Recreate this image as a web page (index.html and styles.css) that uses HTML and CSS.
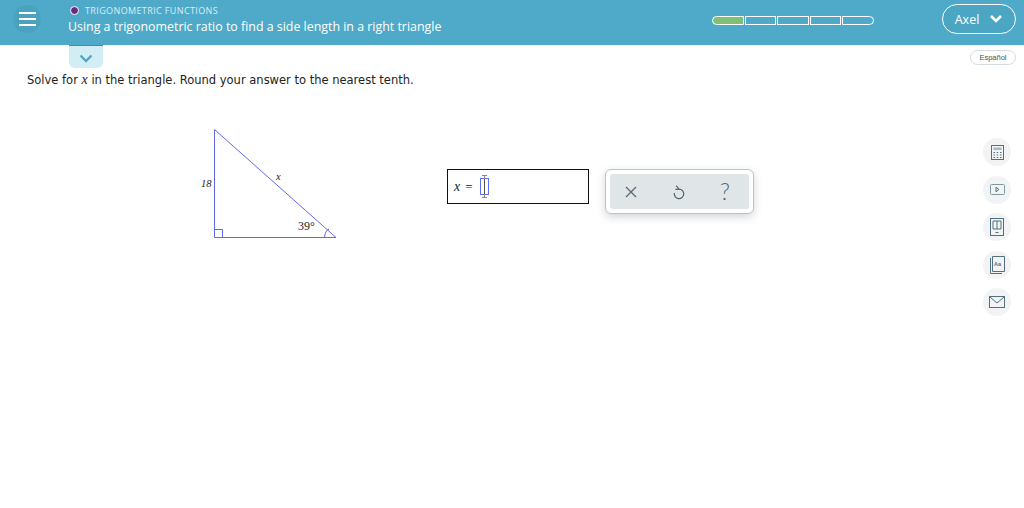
FILE: index.html
```html
<!DOCTYPE html>
<html lang="en">
<head>
<meta charset="utf-8">
<title>Trigonometric Functions</title>
<link rel="stylesheet" href="styles.css">
</head>
<body>
<header class="topbar">
  <button class="menu" aria-label="Menu"><span></span><span></span><span></span></button>
  <div class="heading">
    <div class="topic"><i class="dot"></i>TRIGONOMETRIC FUNCTIONS</div>
    <div class="title">Using a trigonometric ratio to find a side length in a right triangle</div>
  </div>
  <div class="progress">
    <span class="seg first done"></span><span class="seg"></span><span class="seg"></span><span class="seg"></span><span class="seg last"></span>
  </div>
  <div class="user">Axel
    <svg width="14" height="10" viewBox="0 0 14 10"><path d="M2 2l5 5 5-5" fill="none" stroke="#fff" stroke-width="2.6"/></svg>
  </div>
</header>
<div class="strip">
  <div class="tab"><svg width="14" height="9" viewBox="0 0 14 9"><path d="M1.500 1.500L7 7l5.500-5.500" fill="none" stroke="#4ea9c6" stroke-width="2.400"/></svg></div>
  <div class="lang">Español</div>
</div>
<main class="work">
  <section class="content">
    <p class="prompt">Solve for <var>x</var> in the triangle. Round your answer to the nearest tenth.</p>
    <div class="figure-row">
      <svg class="triangle" width="145" height="120" viewBox="0 0 145 120">
        <path d="M19.500 4.500V112.500H141Z" fill="none" stroke="#6068ea" stroke-width="1"/>
        <path d="M19.500 104.500H27.500V112.500" fill="none" stroke="#6068ea" stroke-width="1"/>
        <path d="M129.500 112.500Q130 106 134 104" fill="none" stroke="#6068ea" stroke-width="1"/>
        <text class="lbl it" x="6" y="62">18</text>
        <text class="lbl it" x="81" y="55">x</text>
        <text class="lbl deg" x="103" y="105">39°</text>
      </svg>
      <div class="answer">
        <var>x</var><span class="eq">=</span>
        <span class="slot"><i></i></span>
      </div>
      <div class="palette">
        <div class="palette-inner">
          <svg width="14" height="14" viewBox="0 0 14 14"><path d="M2 2l10 10M12 2L2 12" stroke="#54666f" stroke-width="1.200" fill="none"/></svg>
          <svg width="14" height="16" viewBox="0 0 14 16"><path d="M7 5.200A4.700 4.700 0 1 1 2.400 9M7 5.200L4.200 1.600M7 5.200L3.400 5.400" stroke="#54666f" stroke-width="1.200" fill="none"/></svg>
          <span class="help">?</span>
        </div>
      </div>
    </div>
  </section>
  <aside class="rail">
    <div class="tool"><svg width="13" height="15" viewBox="0 0 13 15"><rect x=".5" y=".5" width="12" height="14" fill="none" stroke="#52707f"/><rect x="2.500" y="2.500" width="8" height="2.500" fill="#a9b9c1"/><path d="M2.500 7.500h1.500M5.700 7.500h1.500M9 7.500h1.500M2.500 10h1.500M5.700 10h1.500M9 10h1.500M2.500 12.500h1.500M5.700 12.500h1.500M9 12.500h1.500" stroke="#52707f" stroke-width="1.200"/></svg></div>
    <div class="tool"><svg width="15" height="11" viewBox="0 0 15 11"><rect x=".5" y=".5" width="14" height="10" rx="1" fill="none" stroke="#8298a3"/><path d="M6 3.200v4.600l3-2.300z" fill="none" stroke="#52707f"/></svg></div>
    <div class="tool"><svg width="14" height="18" viewBox="0 0 14 18"><rect x=".5" y=".5" width="13" height="17" fill="none" stroke="#52707f"/><path d="M3 3h8v8H3zM7 3v8M5.500 14.500h3" fill="none" stroke="#52707f"/></svg></div>
    <div class="tool"><svg width="15" height="18" viewBox="0 0 15 18"><path d="M2.500 .5H14.500V15.500H2.500ZM.5 2V17.500H12" fill="none" stroke="#52707f"/><text x="4" y="10" class="aa">Aa</text></svg></div>
    <div class="tool"><svg width="16" height="12" viewBox="0 0 16 12"><rect x=".5" y=".5" width="15" height="11" fill="none" stroke="#52707f"/><path d="M1 1l7 6 7-6" fill="none" stroke="#52707f"/></svg></div>
  </aside>
</main>
</body>
</html>
```
FILE: styles.css
```css
* { box-sizing: border-box; }
html, body { margin: 0; height: 100%; background: #fff; overflow: hidden; }
body { font-family: "DejaVu Sans", sans-serif; color: #222; }

.topbar { height: 45px; background: #4eaac8; display: flex; align-items: flex-start; color: #fff; font-family: "Open Sans", sans-serif; }
.menu { width: 28px; height: 28px; margin: 5px 0 0 13px; padding: 0; border: 0; border-radius: 50%; background: #4ba2bf; display: flex; flex-direction: column; justify-content: center; align-items: center; gap: 4px; flex: none; }
.menu span { width: 17px; height: 2px; background: #fff; }
.heading { margin-left: 27px; width: 644px; flex: none; }
.topic { margin-top: 4px; height: 13px; display: flex; align-items: center; font-size: 9px; letter-spacing: .38px; color: #dcedf3; }
.dot { width: 9px; height: 9px; border-radius: 50%; background: #6b2a80; border: 1px solid #fff; margin: 0 6px 0 2px; }
.title { margin-top: 1px; font-size: 12.400px; line-height: 17px; white-space: nowrap; }
.progress { display: flex; gap: 1px; margin: 16px 0 0 0; width: 162px; height: 9px; flex: none; }
.seg { flex: 1; border: 1px solid #fff; }
.seg.first { border-radius: 4.500px 0 0 4.500px; background: #7fbf77; }
.seg.last { border-radius: 0 4.500px 4.500px 0; }
.user { margin: 4px 0 0 68px; width: 74px; height: 30px; border: 1px solid #fff; border-radius: 15px; background: #4ba6c3; display: flex; align-items: center; justify-content: center; gap: 10px; font-size: 12.500px; flex: none; }

.strip { height: 23px; display: flex; justify-content: space-between; padding: 0 8px 0 69px; }
.tab { width: 34px; height: 23px; background: #d3edf4; border-top: 1px solid #3f8fab; border-radius: 0 0 6px 6px; display: flex; align-items: center; justify-content: center; padding-top: 2px; }
.lang { width: 46px; height: 15px; margin-top: 5px; border: 1px solid #d5dcdf; border-radius: 8px; font-size: 7.500px; line-height: 13px; text-align: center; color: #3f5560; font-family: "Liberation Sans", sans-serif; }

.work { display: flex; justify-content: space-between; padding: 0 13px 0 27px; }
.prompt { margin: 4px 0 0; font-size: 11.500px; line-height: 16px; white-space: nowrap; color: #222; }
var { font-family: "Liberation Serif", serif; font-style: italic; font-size: 14px; }
.figure-row { display: flex; align-items: flex-start; margin-top: 37px; }
.triangle { margin: 0 0 0 168px; flex: none; }
.lbl { font-family: "Liberation Serif", serif; font-size: 11px; fill: #222; }
.deg { font-size: 12px; }
.it { font-style: italic; font-size: 10.500px; }
.answer { margin: 44px 0 0 107px; width: 142px; height: 35px; border: 1px solid #111; background: #fff; display: flex; align-items: center; padding-left: 6px; flex: none; font-family: "Liberation Serif", serif; }
.eq { margin: 0 7px 0 5px; font-size: 13px; }
.slot { width: 9px; height: 17px; border: 1.500px solid #5a70f0; display: flex; justify-content: center; position: relative; }
.slot i { width: 1px; height: 100%; background: #555; }
.slot::before, .slot::after { content: ""; position: absolute; left: 50%; width: 5px; height: 3px; margin-left: -2.500px; background: linear-gradient(#888, #888) center / 1px 100% no-repeat; }
.slot::before { top: -4px; border-top: 1px solid #888; }
.slot::after { bottom: -4px; border-bottom: 1px solid #888; }
.palette { margin: 44px 0 0 16px; width: 149px; height: 45px; border: 1px solid #b9c4c9; border-radius: 6px; background: #fff; box-shadow: 0 3px 8px rgba(90,110,120,.28); padding: 4px; flex: none; }
.palette-inner { height: 35px; background: #e0e5e8; border-radius: 3px; display: flex; align-items: center; justify-content: space-between; padding: 0 19px 0 14px; }
.help { font-family: "Lato", sans-serif; font-weight: 300; font-size: 23px; line-height: 1; color: #54666f; }

.rail { display: flex; flex-direction: column; gap: 9.500px; margin-top: 70px; flex: none; }
.tool { width: 28px; height: 28px; border-radius: 50%; background: #f1f3f4; display: flex; align-items: center; justify-content: center; }
.aa { font-family: "Liberation Sans", sans-serif; font-size: 5.500px; font-weight: 700; fill: #52707f; }
```
